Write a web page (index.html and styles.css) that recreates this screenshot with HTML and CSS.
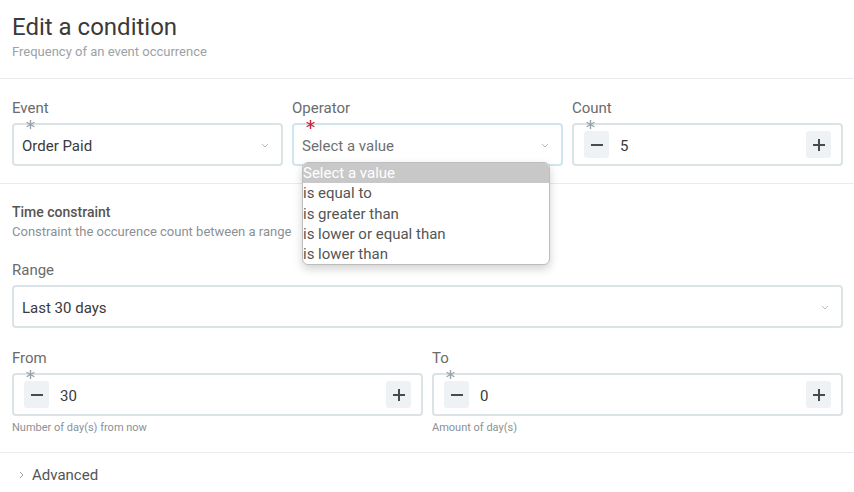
FILE: index.html
```html
<!DOCTYPE html>
<html>
<head>
<meta charset="utf-8">
<link rel="stylesheet" href="styles.css">
</head>
<body>
<div class="page">
  <header class="head">
    <h1 class="title">Edit a condition</h1>
    <p class="subtitle">Frequency of an event occurrence</p>
  </header>

  <section class="section row3">
    <div class="field">
      <label class="label">Event</label>
      <div class="box select">
        <svg class="req" width="9" height="9" viewBox="0 0 10 10"><g stroke="#9aa3a8" stroke-width="1.6"><path d="M5 0v10"/><path d="M0.7 2.5l8.6 5"/><path d="M0.7 7.5l8.6-5"/></g></svg>
        <span class="value">Order Paid</span>
        <svg class="chev" width="8" height="5" viewBox="0 0 8 5"><path d="M1 1l3 3 3-3" fill="none" stroke="#b5bcc0" stroke-width="1"/></svg>
      </div>
    </div>
    <div class="field op">
      <label class="label">Operator</label>
      <div class="box select focus">
        <svg class="req" width="9" height="9" viewBox="0 0 10 10"><g stroke="#d0243c" stroke-width="1.6"><path d="M5 0v10"/><path d="M0.7 2.5l8.6 5"/><path d="M0.7 7.5l8.6-5"/></g></svg>
        <span class="value placeholder">Select a value</span>
        <svg class="chev" width="8" height="5" viewBox="0 0 8 5"><path d="M1 1l3 3 3-3" fill="none" stroke="#b5bcc0" stroke-width="1"/></svg>
      </div>
      <ul class="menu">
        <li class="sel">Select a value</li>
        <li>is equal to</li>
        <li>is greater than</li>
        <li>is lower or equal than</li>
        <li>is lower than</li>
      </ul>
    </div>
    <div class="field">
      <label class="label">Count</label>
      <div class="box stepper">
        <svg class="req" width="9" height="9" viewBox="0 0 10 10"><g stroke="#9aa3a8" stroke-width="1.6"><path d="M5 0v10"/><path d="M0.7 2.5l8.6 5"/><path d="M0.7 7.5l8.6-5"/></g></svg>
        <button class="btn"><svg width="12" height="12" viewBox="0 0 12 12"><path d="M0 6h12" stroke="#4a4a4a" stroke-width="2"/></svg></button>
        <span class="value num">5</span>
        <button class="btn"><svg width="12" height="12" viewBox="0 0 12 12"><path d="M0 6h12M6 0v12" stroke="#4a4a4a" stroke-width="2"/></svg></button>
      </div>
    </div>
  </section>

  <section class="section time">
    <h2 class="sec-title">Time constraint</h2>
    <p class="sec-desc">Constraint the occurence count between a range</p>
    <div class="field range">
      <label class="label">Range</label>
      <div class="box select">
        <span class="value">Last 30 days</span>
        <svg class="chev" width="8" height="5" viewBox="0 0 8 5"><path d="M1 1l3 3 3-3" fill="none" stroke="#b5bcc0" stroke-width="1"/></svg>
      </div>
    </div>
    <div class="row2">
      <div class="field">
        <label class="label">From</label>
        <div class="box stepper">
          <svg class="req" width="9" height="9" viewBox="0 0 10 10"><g stroke="#9aa3a8" stroke-width="1.6"><path d="M5 0v10"/><path d="M0.7 2.5l8.6 5"/><path d="M0.7 7.5l8.6-5"/></g></svg>
          <button class="btn"><svg width="12" height="12" viewBox="0 0 12 12"><path d="M0 6h12" stroke="#4a4a4a" stroke-width="2"/></svg></button>
          <span class="value num">30</span>
          <button class="btn"><svg width="12" height="12" viewBox="0 0 12 12"><path d="M0 6h12M6 0v12" stroke="#4a4a4a" stroke-width="2"/></svg></button>
        </div>
        <p class="help">Number of day(s) from now</p>
      </div>
      <div class="field">
        <label class="label">To</label>
        <div class="box stepper">
          <svg class="req" width="9" height="9" viewBox="0 0 10 10"><g stroke="#9aa3a8" stroke-width="1.6"><path d="M5 0v10"/><path d="M0.7 2.5l8.6 5"/><path d="M0.7 7.5l8.6-5"/></g></svg>
          <button class="btn"><svg width="12" height="12" viewBox="0 0 12 12"><path d="M0 6h12" stroke="#4a4a4a" stroke-width="2"/></svg></button>
          <span class="value num">0</span>
          <button class="btn"><svg width="12" height="12" viewBox="0 0 12 12"><path d="M0 6h12M6 0v12" stroke="#4a4a4a" stroke-width="2"/></svg></button>
        </div>
        <p class="help">Amount of day(s)</p>
      </div>
    </div>
  </section>

  <section class="advanced">
    <svg class="adv-chev" width="5" height="8" viewBox="0 0 5 8"><path d="M1 1l3 3-3 3" fill="none" stroke="#9aa2a6" stroke-width="1"/></svg>
    <span>Advanced</span>
  </section>
</div>
</body>
</html>
```

FILE: styles.css
```css
* { box-sizing: border-box; }
html, body { margin: 0; padding: 0; background: #fff; }
body {
  font-family: Roboto, "Liberation Sans", sans-serif;
  color: #333;
  width: 854px;
  height: 492px;
  overflow: hidden;
}
.page { display: flex; flex-direction: column; }
.head {
  padding: 13px 12px 0 12px;
  height: 79px;
  border-bottom: 1px solid #e8ecee;
}
.title {
  margin: 0;
  font-size: 24px;
  font-weight: 400;
  line-height: 28px;
  color: #3a3a3a;
}
.subtitle {
  margin: 3px 0 0 0;
  font-size: 13px;
  line-height: 16px;
  color: #9ba2a8;
}
.section { padding: 0 11px 0 12px; border-bottom: 1px solid #e8ecee; }
.row3 {
  display: grid;
  grid-template-columns: 1fr 1fr 1fr;
  gap: 9px;
  padding-top: 20px;
  height: 105px;
}
.field { display: flex; flex-direction: column; position: relative; }
.label {
  font-size: 15px;
  line-height: 18px;
  color: #6b6b6b;
  margin-bottom: 6px;
}
.box {
  position: relative;
  height: 43px;
  border: 2px solid #dbe3e6;
  border-radius: 4px;
  display: flex;
  align-items: center;
  padding: 0 8px;
  background: #fff;
}
.box.focus { border-color: #cfe5f0; }
.req {
  position: absolute;
  left: 12px;
  top: -5px;
}
.value { font-size: 15px; color: #3a3a3a; flex: 1; padding-top: 3px; }
.placeholder { color: #6f6f6f; }
.chev { margin-right: 4px; margin-top: 2px; }
.stepper { padding: 0 10px 0 10px; gap: 11px; }
.btn {
  width: 25px;
  height: 27px;
  border: none;
  border-radius: 3px;
  background: #eef2f4;
  padding: 0;
  display: flex;
  align-items: center;
  justify-content: center;
}
.menu {
  position: absolute;
  left: 10px;
  top: 63px;
  width: 248px;
  margin: 0;
  padding: 0;
  list-style: none;
  background: #fff;
  border: 1px solid #bdbdbd;
  border-radius: 6px;
  box-shadow: 0 4px 10px rgba(0,0,0,0.18);
  overflow: hidden;
  z-index: 10;
  font-size: 15px;
}
.menu li { height: 20.3px; line-height: 20px; color: #555; }
.menu li.sel { background: #c8c8c8; color: #fff; }
.time { padding-top: 19px; height: 269px; }
.sec-title {
  margin: 0;
  font-size: 14px;
  font-weight: 500;
  line-height: 18px;
  color: #555;
}
.sec-desc {
  margin: 3px 0 0 0;
  font-size: 13px;
  line-height: 16px;
  color: #8a9196;
}
.range { margin-top: 21px; }
.row2 {
  display: grid;
  grid-template-columns: 1fr 1fr;
  gap: 9px;
  margin-top: 21px;
}
.help {
  margin: 5px 0 0 0;
  font-size: 11px;
  line-height: 14px;
  color: #8a9196;
}
.advanced {
  display: flex;
  align-items: center;
  gap: 8px;
  padding: 13px 12px 0 19px;
  font-size: 15px;
  color: #555;
}
```
